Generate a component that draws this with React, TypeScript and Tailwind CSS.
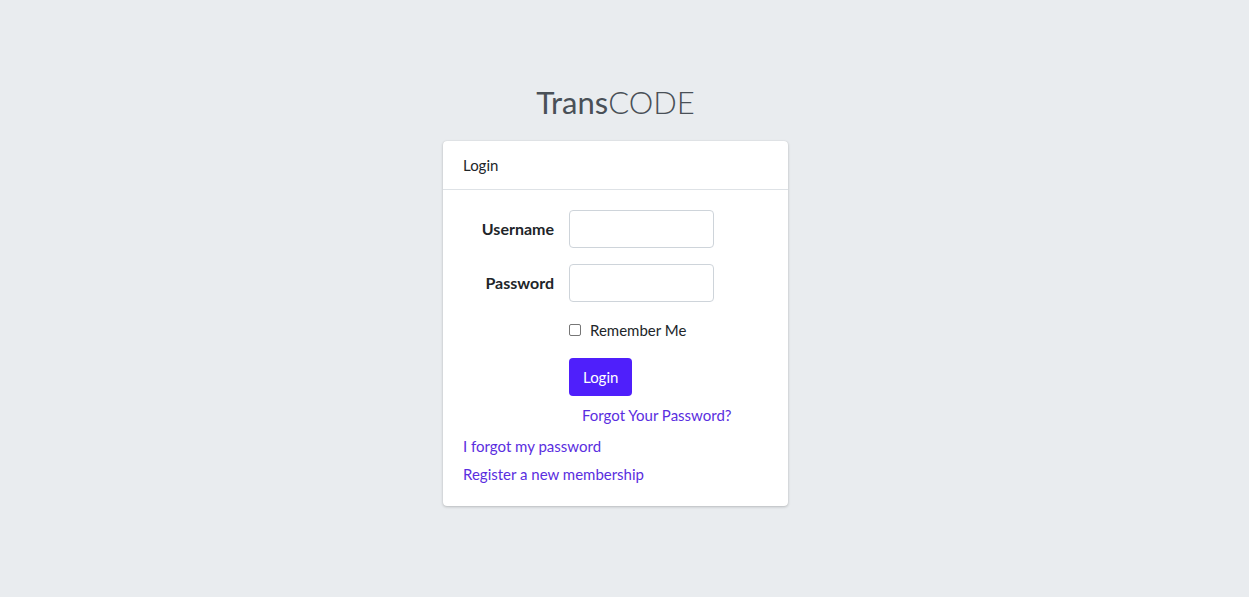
import React from "react";

export default function App() {
  return (
    <div
      className="min-h-screen bg-[#e9ecef] flex flex-col items-center pt-[82px] pr-[18px] text-[#212529] text-[16px] leading-6"
      style={{ fontFamily: "Lato, 'Noto Sans', sans-serif" }}
    >
      <div className="w-[345px]">
        <div className="text-center text-[31px] leading-[40px] font-light text-[#495057] mb-[19px]">
          <span className="font-normal">Trans</span>CODE
        </div>
        <div className="bg-white rounded-[4px] shadow-[0_0_1px_rgba(0,0,0,0.125),0_1px_3px_rgba(0,0,0,0.2)]">
          <div className="px-5 py-3 border-b border-[#dee2e6] text-[15px]">Login</div>
          <div className="p-5">
            <div className="flex items-center mb-4">
              <label className="w-[91px] text-right font-bold text-[16px]">Username</label>
              <input className="ml-[15px] w-[145px] h-[38px] border border-[#ced4da] rounded-[4px] px-3 outline-none" />
            </div>
            <div className="flex items-center mb-4">
              <label className="w-[91px] text-right font-bold text-[16px]">Password</label>
              <input type="password" className="ml-[15px] w-[145px] h-[38px] border border-[#ced4da] rounded-[4px] px-3 outline-none" />
            </div>
            <div className="ml-[106px] mb-4 flex items-center h-6">
              <span className="w-[12px] h-[12px] border border-[#767676] rounded-[2px] bg-white" />
              <span className="ml-[9px] text-[15px]">Remember Me</span>
            </div>
            <div className="ml-[106px]">
              <button className="h-[38px] px-[14px] rounded-[4px] bg-[#4f1ffb] text-white text-[15px]">Login</button>
              <div className="h-[38px] flex items-center pl-[13px] text-[#5a2ee0] text-[15px]">Forgot Your Password?</div>
            </div>
            <p className="mb-1 text-[#5a2ee0] text-[15px]">I forgot my password</p>
            <p className="text-[#5a2ee0] text-[15px]">Register a new membership</p>
          </div>
        </div>
      </div>
    </div>
  );
}
